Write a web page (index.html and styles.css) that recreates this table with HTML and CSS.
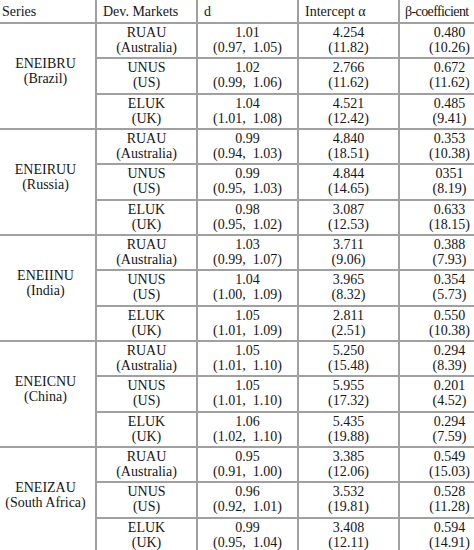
FILE: index.html
```html
<!DOCTYPE html>
<html>
<head>
<meta charset="utf-8">
<link rel="stylesheet" href="styles.css">
</head>
<body>
<table class="t">
<colgroup><col class="c"><col class="c"><col class="c"><col class="c"><col class="c"></colgroup>
<thead>
<tr class="hd"><th>Series</th><th>Dev. Markets</th><th>d</th><th>Intercept α</th><th class="tight">β-coefficient</th></tr>
</thead>
<tbody>
<tr><td class="series" rowspan="3">ENEIBRU<br>(Brazil)</td><td>RUAU<br>(Australia)</td><td>1.01<br>(0.97,&nbsp; 1.05)</td><td>4.254<br>(11.82)</td><td>0.480<br>(10.26)</td></tr>
<tr><td>UNUS<br>(US)</td><td>1.02<br>(0.99,&nbsp; 1.06)</td><td>2.766<br>(11.62)</td><td>0.672<br>(11.62)</td></tr>
<tr><td>ELUK<br>(UK)</td><td>1.04<br>(1.01,&nbsp; 1.08)</td><td>4.521<br>(12.42)</td><td>0.485<br>(9.41)</td></tr>

<tr><td class="series" rowspan="3">ENEIRUU<br>(Russia)</td><td>RUAU<br>(Australia)</td><td>0.99<br>(0.94,&nbsp; 1.03)</td><td>4.840<br>(18.51)</td><td>0.353<br>(10.38)</td></tr>
<tr><td>UNUS<br>(US)</td><td>0.99<br>(0.95,&nbsp; 1.03)</td><td>4.844<br>(14.65)</td><td>0351<br>(8.19)</td></tr>
<tr><td>ELUK<br>(UK)</td><td>0.98<br>(0.95,&nbsp; 1.02)</td><td>3.087<br>(12.53)</td><td>0.633<br>(18.15)</td></tr>

<tr><td class="series" rowspan="3">ENEIINU<br>(India)</td><td>RUAU<br>(Australia)</td><td>1.03<br>(0.99,&nbsp; 1.07)</td><td>3.711<br>(9.06)</td><td>0.388<br>(7.93)</td></tr>
<tr><td>UNUS<br>(US)</td><td>1.04<br>(1.00,&nbsp; 1.09)</td><td>3.965<br>(8.32)</td><td>0.354<br>(5.73)</td></tr>
<tr><td>ELUK<br>(UK)</td><td>1.05<br>(1.01,&nbsp; 1.09)</td><td>2.811<br>(2.51)</td><td>0.550<br>(10.38)</td></tr>

<tr><td class="series" rowspan="3">ENEICNU<br>(China)</td><td>RUAU<br>(Australia)</td><td>1.05<br>(1.01,&nbsp; 1.10)</td><td>5.250<br>(15.48)</td><td>0.294<br>(8.39)</td></tr>
<tr><td>UNUS<br>(US)</td><td>1.05<br>(1.01,&nbsp; 1.10)</td><td>5.955<br>(17.32)</td><td>0.201<br>(4.52)</td></tr>
<tr><td>ELUK<br>(UK)</td><td>1.06<br>(1.02,&nbsp; 1.10)</td><td>5.435<br>(19.88)</td><td>0.294<br>(7.59)</td></tr>

<tr><td class="series" rowspan="3">ENEIZAU<br>(South Africa)</td><td>RUAU<br>(Australia)</td><td>0.95<br>(0.91,&nbsp; 1.00)</td><td>3.385<br>(12.06)</td><td>0.549<br>(15.03)</td></tr>
<tr><td>UNUS<br>(US)</td><td>0.96<br>(0.92,&nbsp; 1.01)</td><td>3.532<br>(19.81)</td><td>0.528<br>(11.28)</td></tr>
<tr><td>ELUK<br>(UK)</td><td>0.99<br>(0.95,&nbsp; 1.04)</td><td>3.408<br>(12.11)</td><td>0.594<br>(14.91)</td></tr>
</tbody>
</table>
</body>
</html>
```
FILE: styles.css
```css
html, body {
  margin: 0;
  padding: 0;
  background: #ffffff;
  overflow: hidden;
}
body {
  width: 474px;
  height: 550px;
  font-family: "Liberation Serif", "Times New Roman", serif;
  font-size: 14px;
  color: #161616;
}
.t {
  border-collapse: collapse;
  table-layout: fixed;
  width: 505px;
  margin-left: -6px;
}
.c {
  width: 101px;
}
.t th, .t td {
  border: 2px solid #a0a0a0;
  padding: 0;
  line-height: 15px;
  white-space: nowrap;
  overflow: hidden;
}
.t th {
  border-top: none;
  font-weight: normal;
  text-align: left;
  height: 22px;
  padding-left: 6px;
  vertical-align: middle;
}
.t th.tight {
  padding-left: 5px;
  letter-spacing: -0.6px;
}
.t td {
  height: 35.33px;
  box-sizing: border-box;
  text-align: center;
  vertical-align: top;
  padding-top: 1px;
}
.t td.series {
  vertical-align: middle;
  padding-top: 0;
  padding-bottom: 10px;
  padding-left: 0;
}
```
